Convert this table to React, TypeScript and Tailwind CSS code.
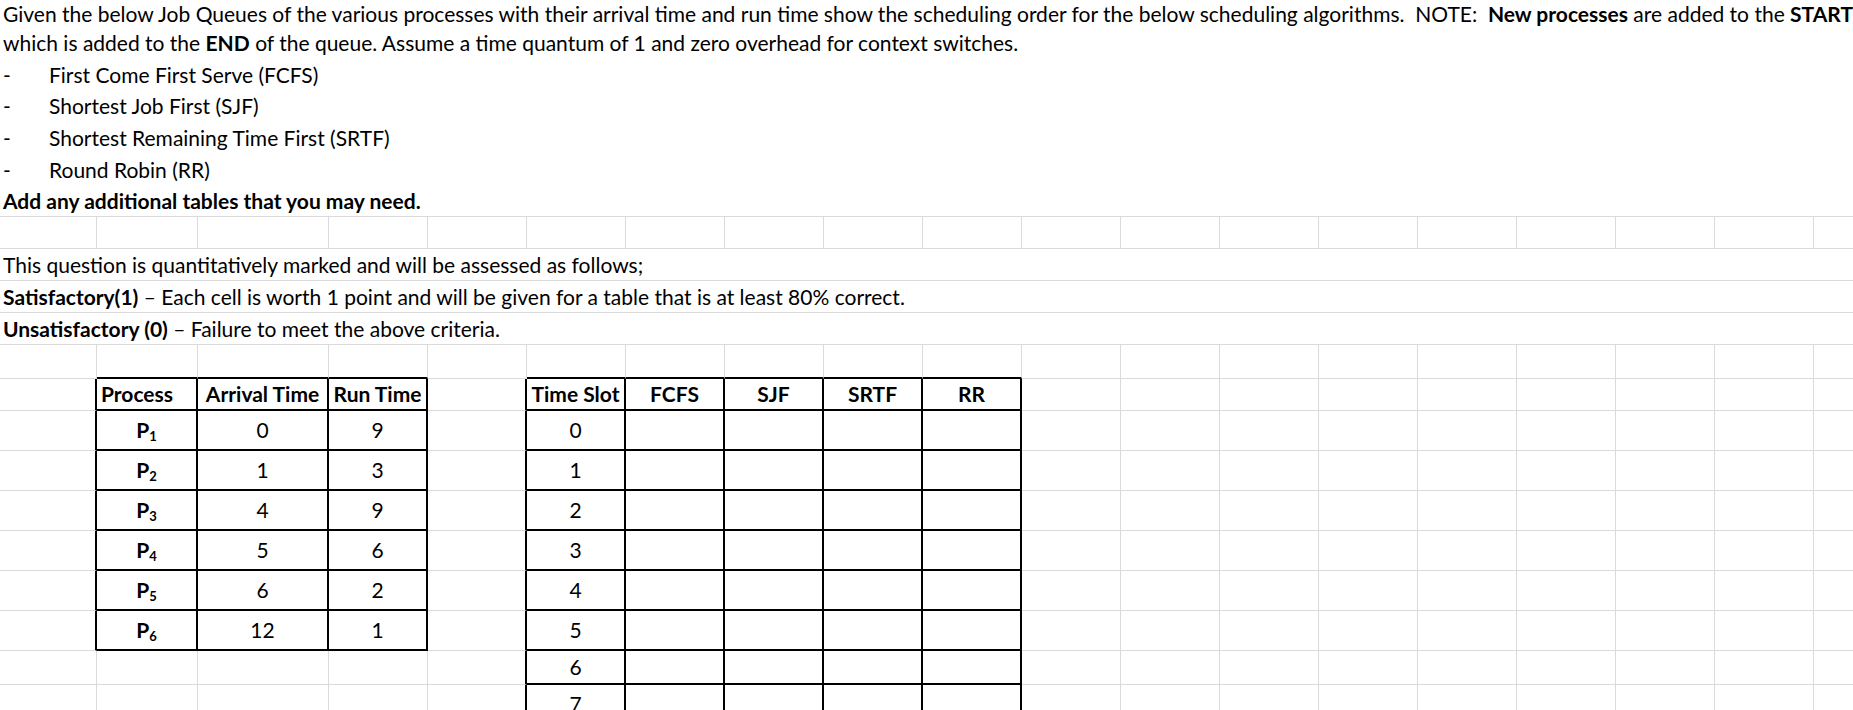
import React from "react";

// Excel-like sheet: column widths and row heights measured off the reference
const COLS = [97, 101, 131, ...Array.from({ length: 16 }, () => 99)];

type Edge = "n" | "g" | "k";

const RIGHT: Record<Edge, string> = {
  n: "",
  g: "border-r border-r-[#dadada]",
  k: "border-r-2 border-r-black",
};
const BOTTOM: Record<Edge, string> = {
  n: "",
  g: "border-b border-b-[#dadada]",
  k: "border-b-2 border-b-black",
};

const FONT = "font-['Lato','Liberation_Sans',sans-serif]";

type RowKind = "blank" | "above" | "table" | "slots";

function edgesFor(kind: RowKind, col: number): [Edge, Edge] {
  const inProc = col >= 1 && col <= 3;
  const inSlot = col >= 5 && col <= 9;
  if (kind === "above") {
    return ["g", inProc || inSlot ? "k" : "g"];
  }
  if (kind === "table") {
    if (col === 0 || col === 4) return ["k", "g"];
    if (inProc || inSlot) return ["k", "k"];
    return ["g", "g"];
  }
  if (kind === "slots") {
    if (col === 4) return ["k", "g"];
    if (inSlot) return ["k", "k"];
    return ["g", "g"];
  }
  return ["g", "g"];
}

function P({ n }: { n: number }) {
  return (
    <span className="font-bold">
      P<sub className="text-[13px] -bottom-[3px]">{n}</sub>
    </span>
  );
}

function SheetRow({
  h,
  kind,
  cells = {},
}: {
  h: number;
  kind: RowKind;
  cells?: Record<number, React.ReactNode>;
}) {
  return (
    <div className="flex shrink-0" style={{ height: h }}>
      {COLS.map((w, i) => {
        const [r, b] = edgesFor(kind, i);
        const content = cells[i];
        return (
          <div
            key={i}
            className={`shrink-0 flex items-center justify-center overflow-hidden whitespace-nowrap ${RIGHT[r]} ${BOTTOM[b]}`}
            style={{ width: w }}
          >
            {content}
          </div>
        );
      })}
    </div>
  );
}

function TextRow({
  h,
  line = false,
  children,
}: {
  h: number;
  line?: boolean;
  children?: React.ReactNode;
}) {
  return (
    <div
      className={`flex items-center shrink-0 whitespace-nowrap overflow-hidden pl-[3px] ${line ? BOTTOM.g : ""}`}
      style={{ height: h }}
    >
      {children}
    </div>
  );
}

function Bullet({ children }: { children: React.ReactNode }) {
  return (
    <span className="flex">
      <span className="w-[46px]">-</span>
      <span>{children}</span>
    </span>
  );
}

const processes = [
  { n: 1, arrival: 0, run: 9 },
  { n: 2, arrival: 1, run: 3 },
  { n: 3, arrival: 4, run: 9 },
  { n: 4, arrival: 5, run: 6 },
  { n: 5, arrival: 6, run: 2 },
  { n: 6, arrival: 12, run: 1 },
];

export default function App() {
  return (
    <div
      className={`w-full h-[710px] overflow-hidden bg-white text-black text-[21px] ${FONT}`}
    >
      <TextRow h={27}>
        Given the below Job Queues of the various processes with their arrival time and run time
        show the scheduling order for the below scheduling algorithms.&nbsp; NOTE:&nbsp;&nbsp;
        <b>New processes</b>&nbsp;are added to the&nbsp;<b>START</b>
      </TextRow>
      <TextRow h={32}>
        which is added to the&nbsp;<b>END</b>&nbsp;of the queue. Assume a time quantum of 1 and
        zero overhead for context switches.
      </TextRow>
      <TextRow h={31}>
        <Bullet>First Come First Serve (FCFS)</Bullet>
      </TextRow>
      <TextRow h={32}>
        <Bullet>Shortest Job First (SJF)</Bullet>
      </TextRow>
      <TextRow h={32}>
        <Bullet>Shortest Remaining Time First (SRTF)</Bullet>
      </TextRow>
      <TextRow h={31}>
        <Bullet>Round Robin (RR)</Bullet>
      </TextRow>
      <TextRow h={32} line>
        <b>Add any additional tables that you may need.</b>
      </TextRow>

      <SheetRow h={32} kind="blank" />

      <TextRow h={32} line>
        This question is quantitatively marked and will be assessed as follows;
      </TextRow>
      <TextRow h={32} line>
        <b>Satisfactory(1)</b>&nbsp;– Each cell is worth 1 point and will be given for a table that
        is at least 80% correct.
      </TextRow>
      <TextRow h={32} line>
        <b>Unsatisfactory (0)</b>&nbsp;– Failure to meet the above criteria.
      </TextRow>

      <SheetRow h={34} kind="above" />

      {/* Header row of both tables */}
      <SheetRow
        h={32}
        kind="table"
        cells={{
          1: <span className="w-full pl-[4px] font-bold">Process</span>,
          2: <span className="font-bold">Arrival Time</span>,
          3: <span className="font-bold">Run Time</span>,
          5: <span className="font-bold">Time Slot</span>,
          6: <span className="font-bold">FCFS</span>,
          7: <span className="font-bold">SJF</span>,
          8: <span className="font-bold">SRTF</span>,
          9: <span className="font-bold">RR</span>,
        }}
      />

      {processes.map((p, i) => (
        <SheetRow
          key={p.n}
          h={40}
          kind="table"
          cells={{
            1: <P n={p.n} />,
            2: p.arrival,
            3: p.run,
            5: i,
          }}
        />
      ))}

      <SheetRow h={34} kind="slots" cells={{ 5: 6 }} />
      <SheetRow h={40} kind="slots" cells={{ 5: 7 }} />
    </div>
  );
}
